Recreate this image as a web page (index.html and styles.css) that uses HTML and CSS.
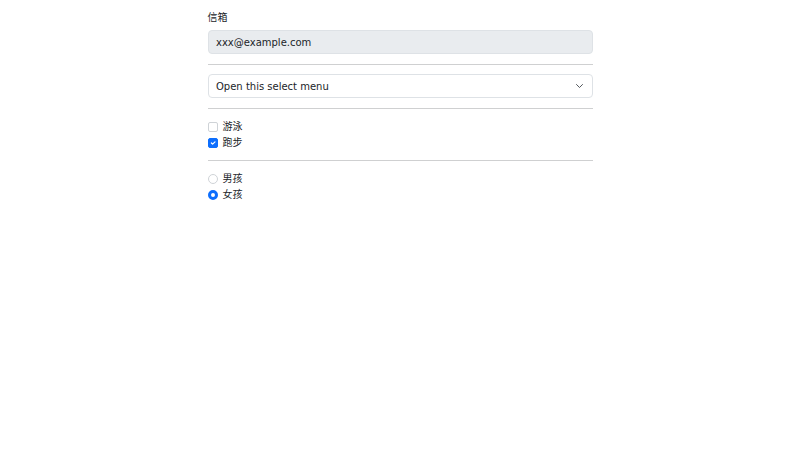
FILE: index.html
```html
<!DOCTYPE html>
<html lang="zh">
<head>
<meta charset="utf-8">
<title>Form</title>
<link rel="stylesheet" href="styles.css">
</head>
<body>
<main class="page">
  <form class="form">
    <label class="label" for="email">信箱</label>
    <div class="control control-disabled" id="email">xxx@example.com</div>
    <hr class="rule">
    <div class="control select">
      <span>Open this select menu</span>
      <svg class="chev" width="7" height="4" viewBox="1 2 14 8"><path d="m2 3 6 6 6-6" fill="none" stroke="#343a40" stroke-width="1.7" stroke-linecap="round" stroke-linejoin="round"/></svg>
    </div>
    <hr class="rule">
    <div class="group">
      <div class="check">
        <span class="box"></span><span class="check-label">游泳</span>
      </div>
      <div class="check">
        <span class="box box-on"><svg width="10" height="10" viewBox="0 0 20 20"><path d="m6 10 3 3 6-6" fill="none" stroke="#fff" stroke-width="3" stroke-linecap="round" stroke-linejoin="round"/></svg></span><span class="check-label">跑步</span>
      </div>
    </div>
    <hr class="rule">
    <div class="group">
      <div class="check">
        <span class="box radio"></span><span class="check-label">男孩</span>
      </div>
      <div class="check">
        <span class="box radio radio-on"></span><span class="check-label">女孩</span>
      </div>
    </div>
  </form>
</main>
</body>
</html>
```
FILE: styles.css
```css
html, body {
  margin: 0;
  padding: 0;
  background: #fff;
}
body {
  font-family: "DejaVu Sans", "Noto Sans CJK SC", sans-serif;
  font-size: 10px;
  line-height: 15px;
  color: #212529;
}
.page {
  display: flex;
  justify-content: center;
  padding-top: 10px;
}
.form {
  width: 385px;
  display: flex;
  flex-direction: column;
}
.label {
  display: block;
  height: 15px;
  margin-bottom: 5px;
}
.control {
  box-sizing: border-box;
  height: 24px;
  padding: 4px 7.5px;
  border: 1px solid #dee2e6;
  border-radius: 4px;
  background: #fff;
  display: flex;
  align-items: center;
}
.control-disabled {
  background: #e9ecef;
}
.select {
  justify-content: space-between;
}
.chev {
  margin-right: 1px;
}
.rule {
  margin: 10px 0 9px;
  border: 0;
  border-top: 1px solid #cfd0d1;
  height: 0;
}
.group {
  display: flex;
  flex-direction: column;
  gap: 1px;
  padding-top: 1px;
}
.check {
  display: flex;
  align-items: flex-start;
  height: 15px;
}
.box {
  box-sizing: border-box;
  flex: none;
  width: 10px;
  height: 10px;
  margin-top: 2.5px;
  border: 1px solid #cfd3d7;
  border-radius: 2px;
  background: #fff;
  margin-right: 5px;
  display: flex;
  align-items: center;
  justify-content: center;
}
.box-on {
  background: #0d6efd;
  border-color: #0d6efd;
}
.radio {
  border-radius: 50%;
}
.radio-on {
  border: 3px solid #0d6efd;
  background: #fff;
}
.check-label {
  line-height: 15px;
}
```
